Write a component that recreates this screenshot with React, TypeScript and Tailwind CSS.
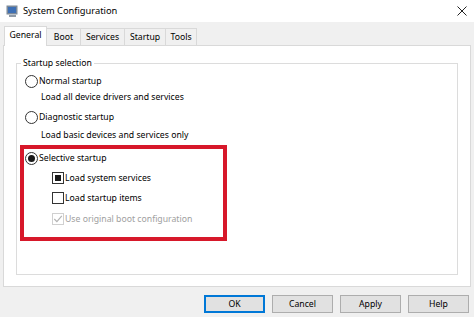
import React from "react";

function Radio({ checked }: { checked?: boolean }) {
  return (
    <span className="flex h-[13px] w-[13px] shrink-0 items-center justify-center rounded-full border border-[#333333] bg-white">
      {checked && <span className="h-[7px] w-[7px] rounded-full bg-[#1a1a1a]" />}
    </span>
  );
}

function Check({ state }: { state: "off" | "square" | "disabled" }) {
  if (state === "disabled") {
    return (
      <span className="flex h-[12px] w-[12px] shrink-0 items-center justify-center border border-[#d0d0d0] bg-white">
        <svg viewBox="0 0 10 10" className="h-[10px] w-[10px]">
          <path d="M1.3 5 L3.9 7.6 L8.8 1.8" fill="none" stroke="#b3b3b3" strokeWidth="1.2" />
        </svg>
      </span>
    );
  }
  return (
    <span className="flex h-[12px] w-[12px] shrink-0 items-center justify-center border border-[#333333] bg-white">
      {state === "square" && <span className="h-[6px] w-[6px] bg-[#1a1a1a]" />}
    </span>
  );
}

const tabs = [
  { label: "Boot", w: "w-[34px]" },
  { label: "Services", w: "w-[44px]" },
  { label: "Startup", w: "w-[41px]" },
  { label: "Tools", w: "w-[31px]" },
];

export default function App() {
  return (
    <div
      className="flex h-[317px] w-[474px] flex-col overflow-hidden bg-[#f0f0f0] text-[8.7px] leading-none text-black"
      style={{ fontFamily: '"Noto Sans", "Open Sans", sans-serif' }}
    >
      {/* title bar */}
      <div className="flex h-[22px] shrink-0 items-center bg-white pl-[6px] pr-[7px]">
        <svg viewBox="0 0 12 12" className="h-[12px] w-[12px]">
          <rect x="0.5" y="0.5" width="11" height="9" fill="#7d8a99" />
          <rect x="2" y="2" width="8" height="6" fill="#3d6fb5" />
          <rect x="3" y="10" width="7" height="2" fill="#8f9aa6" />
        </svg>
        <span className="ml-[5px] text-[9.3px]">System Configuration</span>
        <svg viewBox="0 0 10 10" className="ml-auto h-[10px] w-[10px]">
          <path d="M0.5 0.5 L9.5 9.5 M9.5 0.5 L0.5 9.5" stroke="#222" strokeWidth="1" />
        </svg>
      </div>

      {/* tabs */}
      <div className="flex items-end pl-[4px] pt-[4px]">
        <div className="relative z-10 -mb-px flex h-[20px] w-[43px] items-center justify-center border border-b-0 border-[#d9d9d9] bg-white pb-[2px]">
          General
        </div>
        {tabs.map((t) => (
          <div
            key={t.label}
            className={`flex h-[17px] ${t.w} items-center justify-center border border-l-0 border-b-0 border-[#d9d9d9] bg-[#f0f0f0]`}
          >
            {t.label}
          </div>
        ))}
      </div>

      {/* panel */}
      <div className="mx-[3px] h-[242px] border border-[#d9d9d9] bg-white px-[12px] pt-[17px]">
        <div className="relative h-[212px] border border-[#dcdcdc] pl-[8px] pt-[9px]">
          <span className="absolute -top-[5px] left-[4px] bg-white px-[2px]">Startup selection</span>

          <div className="flex h-[16px] items-center gap-[1px]">
            <Radio />
            <span>Normal startup</span>
          </div>
          <div className="flex h-[16px] items-center pl-[16px]">Load all device drivers and services</div>

          <div className="mt-[4px] flex h-[16px] items-center gap-[1px]">
            <Radio />
            <span>Diagnostic startup</span>
          </div>
          <div className="mt-[2px] flex h-[16px] items-center pl-[16px]">Load basic devices and services only</div>

          <div className="mt-[7px] flex h-[16px] items-center gap-[1px]">
            <Radio checked />
            <span>Selective startup</span>
          </div>
          <div className="ml-[27px]">
            <div className="mt-[4px] flex h-[16px] items-center gap-[1px]">
              <Check state="square" />
              <span>Load system services</span>
            </div>
            <div className="mt-[4px] flex h-[16px] items-center gap-[1px]">
              <Check state="off" />
              <span>Load startup items</span>
            </div>
            <div className="mt-[5px] flex h-[16px] items-center gap-[1px] text-[#a0a0a0]">
              <Check state="disabled" />
              <span>Use original boot configuration</span>
            </div>
          </div>

          {/* annotation box */}
          <div className="pointer-events-none absolute left-[3px] top-[81px] h-[96px] w-[207px] border-[4px] border-[#d7182a]" />
        </div>
      </div>

      {/* buttons */}
      <div className="mt-[8px] flex justify-end gap-[7px] pr-[5px]">
        <button className="h-[18px] w-[61px] border-2 border-[#0078d7] bg-[#e1e1e1]">OK</button>
        <button className="h-[18px] w-[61px] border border-[#adadad] bg-[#e1e1e1]">Cancel</button>
        <button className="h-[18px] w-[61px] border border-[#adadad] bg-[#e1e1e1]">Apply</button>
        <button className="h-[18px] w-[61px] border border-[#adadad] bg-[#e1e1e1]">Help</button>
      </div>
    </div>
  );
}
